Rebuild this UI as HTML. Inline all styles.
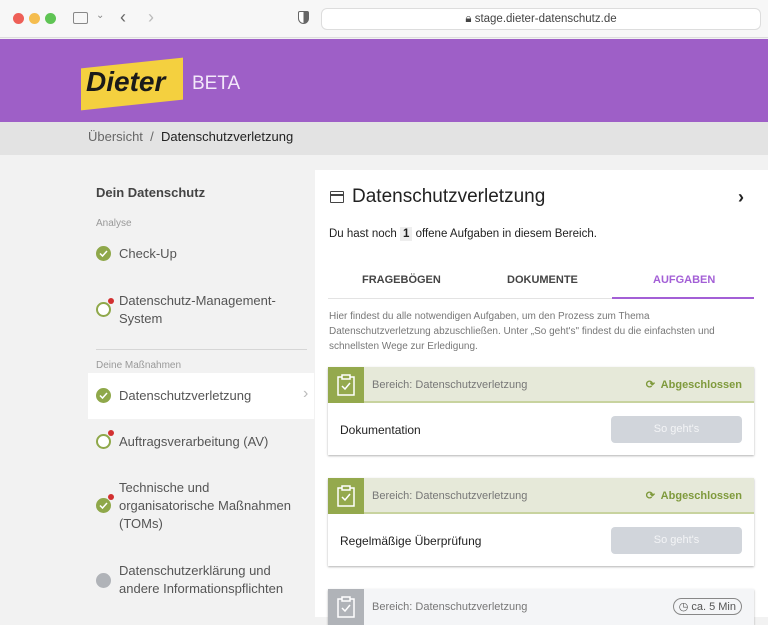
<!DOCTYPE html><html><head><meta charset="utf-8"><style>
*{margin:0;padding:0;box-sizing:border-box}
body{width:768px;height:617px;overflow:hidden;background:#f2f2f2;font-family:"Liberation Sans",sans-serif;position:relative;color:#333}
.a{position:absolute}
.card{position:absolute;left:328px;width:426px;background:#fff;box-shadow:0 1px 2px rgba(0,0,0,.3)}
.ch{height:36px;background:#e6e9d9;border-bottom:2px solid #c8d39f;position:relative}
.ic{position:absolute;left:0;top:0;width:36px;height:36px;background:#94a94d}
.ch .t{position:absolute;left:44px;top:12px;font-size:11px;color:#777}
.ch .s{position:absolute;right:12px;top:11px;font-size:11px;color:#7f9a3c;font-weight:bold}
.cb{height:52px;position:relative}
.cb .t{position:absolute;left:12px;top:20px;font-size:12px;color:#222}
.btn{position:absolute;left:283px;top:13px;width:131px;height:27px;background:#d1d5db;border-radius:4px;color:#f3f4f6;font-size:11px;text-align:center;line-height:27px}
.si{position:absolute;left:119px;font-size:13px;color:#555;line-height:18px}
.dot{position:absolute;left:96px;width:15px;height:15px;border-radius:50%}
.done{background:#8fa84a}
.open{border:2.5px solid #8fa84a;background:#fff}
.red{position:absolute;width:6px;height:6px;border-radius:50%;background:#d23030}
</style></head><body>
<div class="a" style="left:0;top:0;width:768px;height:38px;background:#f7f7f7;border-bottom:1px solid #ddd"></div>
<div class="a" style="left:13px;top:13px;width:11px;height:11px;border-radius:50%;background:#ee5f57"></div>
<div class="a" style="left:29px;top:13px;width:11px;height:11px;border-radius:50%;background:#f5bd4f"></div>
<div class="a" style="left:45px;top:13px;width:11px;height:11px;border-radius:50%;background:#5fc454"></div>
<div class="a" style="left:73px;top:12px;width:15px;height:12px;border:1.5px solid #888;border-radius:2px"></div>
<div class="a" style="left:96px;top:10px;font-size:10px;color:#888">⌄</div>
<div class="a" style="left:120px;top:7px;font-size:18px;color:#666">‹</div>
<div class="a" style="left:148px;top:7px;font-size:18px;color:#bbb">›</div>
<div class="a" style="left:298px;top:11px;width:11px;height:13px;background:linear-gradient(90deg,#fff 50%,#666 50%);border:1.5px solid #666;border-radius:2px 2px 6px 6px"></div>
<div class="a" style="left:321px;top:8px;width:440px;height:22px;background:#fff;border:1px solid #ddd;border-radius:6px;font-size:11.5px;color:#444;text-align:center;line-height:20px">🔒︎ stage.dieter-datenschutz.de</div>
<div class="a" style="left:0;top:39px;width:768px;height:83px;background:#9e5fc7"></div>
<div class="a" style="left:81px;top:63px;width:102px;height:42px;background:#f4d03f;transform:skewY(-6deg)"></div>
<div class="a" style="left:86px;top:66px;font-size:28px;font-weight:bold;font-style:italic;color:#1a1a1a">Dieter</div>
<div class="a" style="left:192px;top:73px;font-size:19px;color:#f3e8fa">BETA</div>
<div class="a" style="left:0;top:122px;width:768px;height:33px;background:#e3e3e3"></div>
<div class="a" style="left:88px;top:129px;font-size:13px;color:#666">Übersicht &nbsp;/&nbsp; <span style="color:#222">Datenschutzverletzung</span></div>
<div class="a" style="left:96px;top:185px;font-size:13px;font-weight:bold;color:#444">Dein Datenschutz</div>
<div class="a" style="left:96px;top:218px;font-size:10px;color:#999">Analyse</div>
<div class="dot done" style="top:246px"></div><div class="si" style="top:245px">Check-Up</div>
<div class="dot open" style="top:302px"></div><div class="red" style="left:108px;top:298px"></div>
<div class="si" style="top:292px">Datenschutz-Management-<br>System</div>
<div class="a" style="left:96px;top:349px;width:211px;height:1px;background:#d6d6d6"></div>
<div class="a" style="left:96px;top:360px;font-size:10px;color:#999">Deine Maßnahmen</div>
<div class="a" style="left:88px;top:373px;width:226px;height:46px;background:#fff"></div>
<div class="a" style="left:303px;top:385px;font-size:16px;color:#bbb">›</div>
<div class="dot done" style="top:388px"></div><div class="si" style="top:387px">Datenschutzverletzung</div>
<div class="dot open" style="top:434px"></div><div class="red" style="left:108px;top:430px"></div>
<div class="si" style="top:433px">Auftragsverarbeitung (AV)</div>
<div class="dot done" style="top:498px"></div><div class="red" style="left:108px;top:494px"></div>
<div class="si" style="top:479px">Technische und<br>organisatorische Maßnahmen<br>(TOMs)</div>
<div class="dot" style="top:573px;background:#b0b3b8"></div>
<div class="si" style="top:562px">Datenschutzerklärung und<br>andere Informationspflichten</div>
<div class="a" style="left:315px;top:170px;width:453px;height:447px;background:#fff"></div>
<div class="a" style="left:330px;top:191px;width:14px;height:12px;border:1.5px solid #444;border-radius:1px"></div>
<div class="a" style="left:330px;top:194px;width:14px;height:1.5px;background:#444"></div>
<div class="a" style="left:352px;top:186px;font-size:19px;color:#222">Datenschutzverletzung</div>
<div class="a" style="left:738px;top:187px;font-size:18px;color:#222;font-weight:bold">›</div>
<div class="a" style="left:329px;top:228px;font-size:11.5px;color:#222">Du hast noch <span style="background:#eee;padding:1px 3px;font-weight:bold">1</span> offene Aufgaben in diesem Bereich.</div>
<div class="a" style="left:362px;top:274px;font-size:11px;font-weight:bold;color:#444">FRAGEBÖGEN</div>
<div class="a" style="left:507px;top:274px;font-size:11px;font-weight:bold;color:#444">DOKUMENTE</div>
<div class="a" style="left:653px;top:274px;font-size:11px;font-weight:bold;color:#a35fd6">AUFGABEN</div>
<div class="a" style="left:328px;top:298px;width:426px;height:1px;background:#e3e3e3"></div>
<div class="a" style="left:612px;top:297px;width:142px;height:2px;background:#a35fd6"></div>
<div class="a" style="left:329px;top:309px;width:420px;font-size:10px;line-height:15px;color:#777">Hier findest du alle notwendigen Aufgaben, um den Prozess zum Thema Datenschutzverletzung abzuschließen. Unter „So geht's" findest du die einfachsten und schnellsten Wege zur Erledigung.</div>
<div class="card" style="top:367px"><div class="ch"><div class="ic"></div><span class="t">Bereich: Datenschutzverletzung</span><span class="s">⟳&nbsp; Abgeschlossen</span></div><div class="cb"><span class="t">Dokumentation</span><div class="btn">So geht's</div></div></div>
<div class="card" style="top:478px"><div class="ch"><div class="ic"></div><span class="t">Bereich: Datenschutzverletzung</span><span class="s">⟳&nbsp; Abgeschlossen</span></div><div class="cb"><span class="t">Regelmäßige Überprüfung</span><div class="btn">So geht's</div></div></div>
<div class="card" style="top:589px"><div class="ch" style="background:#f4f5f7;border:0"><div class="ic" style="background:#b0b3b8"></div><span class="t">Bereich: Datenschutzverletzung</span><span class="s" style="color:#555;font-weight:normal;border:1px solid #888;border-radius:10px;padding:1px 5px;top:9px">◷ ca. 5 Min</span></div></div>
<svg class="a" style="left:337px;top:374px" width="18" height="22"><rect x="1" y="3" width="16" height="18" fill="none" stroke="#fff" stroke-width="1.5"/><rect x="5" y="1" width="8" height="4" fill="#94a94d" stroke="#fff" stroke-width="1.5"/><path d="M5 12l3 3 5-6" fill="none" stroke="#fff" stroke-width="1.5"/></svg>
<svg class="a" style="left:337px;top:485px" width="18" height="22"><rect x="1" y="3" width="16" height="18" fill="none" stroke="#fff" stroke-width="1.5"/><rect x="5" y="1" width="8" height="4" fill="#94a94d" stroke="#fff" stroke-width="1.5"/><path d="M5 12l3 3 5-6" fill="none" stroke="#fff" stroke-width="1.5"/></svg>
<svg class="a" style="left:337px;top:596px" width="18" height="22"><rect x="1" y="3" width="16" height="18" fill="none" stroke="#fff" stroke-width="1.5"/><rect x="5" y="1" width="8" height="4" fill="#b0b3b8" stroke="#fff" stroke-width="1.5"/><path d="M5 12l3 3 5-6" fill="none" stroke="#fff" stroke-width="1.5"/></svg>
<svg class="a" style="left:99px;top:249px" width="9" height="9"><path d="M1 4.5l2.5 2.5 4.5-5" fill="none" stroke="#fff" stroke-width="1.5"/></svg>
<svg class="a" style="left:99px;top:391px" width="9" height="9"><path d="M1 4.5l2.5 2.5 4.5-5" fill="none" stroke="#fff" stroke-width="1.5"/></svg>
<svg class="a" style="left:99px;top:501px" width="9" height="9"><path d="M1 4.5l2.5 2.5 4.5-5" fill="none" stroke="#fff" stroke-width="1.5"/></svg>
</body></html>
